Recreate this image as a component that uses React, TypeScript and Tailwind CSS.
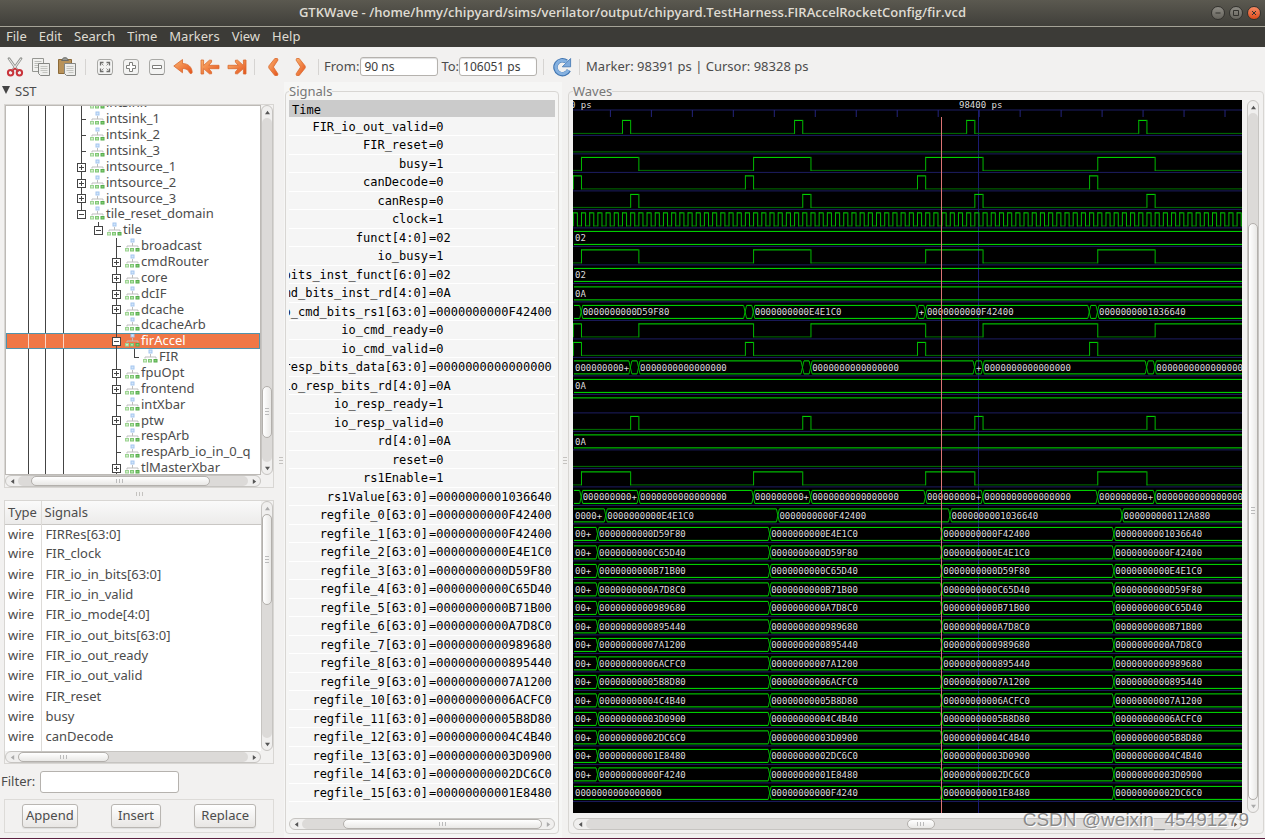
import { useId, type ReactNode } from 'react';
import clsx from 'clsx';

const menus = ['File', 'Edit', 'Search', 'Time', 'Markers', 'View', 'Help'];

type NodeKind = 'leaf' | 'plus' | 'minus' | 'corner';
type TreeNode = { name: string; depth: number; kind: NodeKind; last?: boolean; selected?: boolean };

const tree: TreeNode[] = [
  { name: 'intsink', depth: 3, kind: 'leaf' },
  { name: 'intsink_1', depth: 3, kind: 'leaf' },
  { name: 'intsink_2', depth: 3, kind: 'leaf' },
  { name: 'intsink_3', depth: 3, kind: 'leaf' },
  { name: 'intsource_1', depth: 3, kind: 'plus' },
  { name: 'intsource_2', depth: 3, kind: 'plus' },
  { name: 'intsource_3', depth: 3, kind: 'plus' },
  { name: 'tile_reset_domain', depth: 3, kind: 'minus', last: true },
  { name: 'tile', depth: 4, kind: 'minus', last: true },
  { name: 'broadcast', depth: 5, kind: 'leaf' },
  { name: 'cmdRouter', depth: 5, kind: 'plus' },
  { name: 'core', depth: 5, kind: 'plus' },
  { name: 'dcIF', depth: 5, kind: 'plus' },
  { name: 'dcache', depth: 5, kind: 'plus' },
  { name: 'dcacheArb', depth: 5, kind: 'leaf' },
  { name: 'firAccel', depth: 5, kind: 'minus', selected: true },
  { name: 'FIR', depth: 6, kind: 'corner', last: true },
  { name: 'fpuOpt', depth: 5, kind: 'plus' },
  { name: 'frontend', depth: 5, kind: 'plus' },
  { name: 'intXbar', depth: 5, kind: 'leaf' },
  { name: 'ptw', depth: 5, kind: 'plus' },
  { name: 'respArb', depth: 5, kind: 'leaf' },
  { name: 'respArb_io_in_0_q', depth: 5, kind: 'leaf' },
  { name: 'tlMasterXbar', depth: 5, kind: 'plus' },
];

const wires = [
  'FIRRes[63:0]', 'FIR_clock', 'FIR_io_in_bits[63:0]', 'FIR_io_in_valid', 'FIR_io_mode[4:0]',
  'FIR_io_out_bits[63:0]', 'FIR_io_out_ready', 'FIR_io_out_valid', 'FIR_reset', 'busy', 'canDecode',
];

// Times are counted in clock cycles from the left edge of the canvas.
const CYCLE = 8.195;
const END = 82;
const REPEAT = 21;
const ROW = 18.5;

type Wave =
  | { type: 'bit'; high: [number, number][] }
  | { type: 'bus'; at: number[]; text: string[] };
type Signal = { name: string; value: string; wave: Wave };

const hex = (millions: number) => (millions * 1000000).toString(16).toUpperCase().padStart(16, '0');
const zeros = hex(0);

const pulses = (from: number, to: number): Wave => ({
  type: 'bit',
  high: [0, 1, 2, 3].map((n) => [from + n * REPEAT, Math.min(to + n * REPEAT, END)] as [number, number]),
});
const level = (on: boolean): Wave => ({ type: 'bit', high: on ? [[0, END]] : [] });
const bus = (at: number[], text: string[]): Wave => ({ type: 'bus', at, text });
const clock: Wave = {
  type: 'bit',
  high: Array.from({ length: END }, (_, n) => [n, n + 0.5] as [number, number]),
};
const ready: Wave = { type: 'bit', high: [[0, 1], [8, 22], [29, 43], [50, 64], [71, END]] };

const regfile: Signal[] = Array.from({ length: 16 }, (_, r) => {
  const values = [0, 1, 2, 3].map((n) => hex(15 - r + n));
  let wave = bus([0, 3, 24, 45, 66], ['00+', ...values]);
  if (r === 0) wave = bus([0, 4, 25, 46, 67], ['0000+', ...values]);
  if (r === 15) wave = bus([0, 24, 45, 66], values);
  return { name: `regfile_${r}[63:0]`, value: hex(r === 0 ? 16 : 17 - r), wave };
});

const signals: Signal[] = [
  { name: 'FIR_io_out_valid', value: '0', wave: pulses(6, 7) },
  { name: 'FIR_reset', value: '0', wave: level(false) },
  { name: 'busy', value: '1', wave: pulses(1, 8) },
  { name: 'canDecode', value: '0', wave: pulses(0, 1) },
  { name: 'canResp', value: '0', wave: pulses(7, 8) },
  { name: 'clock', value: '1', wave: clock },
  { name: 'funct[4:0]', value: '02', wave: bus([0], ['02']) },
  { name: 'io_busy', value: '1', wave: pulses(1, 8) },
  { name: 'bits_inst_funct[6:0]', value: '02', wave: bus([0], ['02']) },
  { name: 'md_bits_inst_rd[4:0]', value: '0A', wave: bus([0], ['0A']) },
  {
    name: 'o_cmd_bits_rs1[63:0]',
    value: hex(16),
    wave: bus([0, 1, 21, 22, 42, 43, 63, 64], ['', hex(14), '', hex(15), '+', hex(16), '', hex(17)]),
  },
  { name: 'io_cmd_ready', value: '0', wave: ready },
  { name: 'io_cmd_valid', value: '0', wave: pulses(0, 1) },
  {
    name: 'resp_bits_data[63:0]',
    value: zeros,
    wave: bus([0, 7, 8, 28, 29, 49, 50, 70, 71], ['000000000+', '', zeros, '', zeros, '+', zeros, '', zeros]),
  },
  { name: 'io_resp_bits_rd[4:0]', value: '0A', wave: bus([0], ['0A']) },
  { name: 'io_resp_ready', value: '1', wave: level(true) },
  { name: 'io_resp_valid', value: '0', wave: pulses(7, 8) },
  { name: 'rd[4:0]', value: '0A', wave: bus([0], ['0A']) },
  { name: 'reset', value: '0', wave: level(false) },
  { name: 'rs1Enable', value: '1', wave: pulses(1, 7) },
  {
    name: 'rs1Value[63:0]',
    value: hex(17),
    wave: bus(
      [0, 1, 8, 22, 29, 43, 50, 64, 71],
      ['', '000000000+', zeros, '000000000+', zeros, '000000000+', zeros, '000000000+', zeros],
    ),
  },
  ...regfile,
];

function Scrollbar({ vertical, before, size, after }: { vertical?: boolean; before: number; size: number; after: number }) {
  const arrow = 'flex size-3 shrink-0 items-center justify-center';
  return (
    <div
      aria-hidden="true"
      className={clsx(
        'flex rounded-full border border-[#c6c4c1] bg-[#f0efee]',
        vertical ? 'h-full w-3 flex-col items-center' : 'h-3 w-full items-center',
      )}
    >
      <span className={arrow}>
        <svg viewBox="0 0 6 6" className="size-[5px]" fill={before ? '#555' : '#aaa'}>
          <path d={vertical ? 'M0 5 3 1 6 5Z' : 'M5 0 1 3 5 6Z'} />
        </svg>
      </span>
      <div
        className={clsx(
          'flex min-h-0 min-w-0 flex-1 rounded-full bg-[#dcdad8]',
          vertical ? 'w-full flex-col' : 'h-full',
        )}
      >
        <span className="basis-0" style={{ flexGrow: before }} />
        <span
          className={clsx(
            'flex basis-0 items-center justify-center gap-px rounded-full border border-[#b3b0ac] from-white to-[#e9e8e6]',
            vertical ? 'flex-col bg-linear-to-r' : 'bg-linear-to-b',
          )}
          style={{ flexGrow: size }}
        >
          {[0, 1, 2].map((n) => (
            <i key={n} className={clsx('bg-[#bbb]', vertical ? 'mb-px h-px w-1' : 'mr-px h-1 w-px')} />
          ))}
        </span>
        <span className="basis-0" style={{ flexGrow: after }} />
      </div>
      <span className={arrow}>
        <svg viewBox="0 0 6 6" className="size-[5px]" fill={after ? '#555' : '#aaa'}>
          <path d={vertical ? 'M0 1 3 5 6 1Z' : 'M1 0 5 3 1 6Z'} />
        </svg>
      </span>
    </div>
  );
}

function Grip({ vertical }: { vertical?: boolean }) {
  return (
    <span className={clsx('flex gap-0.5', vertical && 'flex-col')}>
      {[0, 1, 2].map((n) => (
        <i key={n} className={clsx('bg-[#c4c2bf]', vertical ? 'h-px w-1' : 'h-1 w-px')} />
      ))}
    </span>
  );
}

function ToolButton({ label, className, children }: { label: string; className?: string; children: ReactNode }) {
  return (
    <button type="button" aria-label={label} className={clsx('flex size-[22px] shrink-0 items-center justify-center', className)}>
      <svg viewBox="0 0 20 20" className="size-5" fill="none">
        {children}
      </svg>
    </button>
  );
}

function Orange({ d }: { d: string }) {
  const id = useId();
  return (
    <>
      <linearGradient id={id} x1="0" y1="0" x2="1" y2="1">
        <stop offset="0" stopColor="#fbb571" />
        <stop offset="1" stopColor="#e5511a" />
      </linearGradient>
      <path d={d} fill={`url(#${id})`} stroke="#d9692e" strokeWidth="0.8" strokeLinejoin="round" />
    </>
  );
}

function Plate({ children }: { children: ReactNode }) {
  return (
    <>
      <rect x="2.5" y="2.5" width="15" height="15" rx="2.5" fill="#f3f3f2" stroke="#a9a9a6" />
      <path d="M3.5 17.5h13" stroke="#858583" />
      {children}
    </>
  );
}

function Separator({ className }: { className?: string }) {
  return <span className={clsx('h-4 w-px shrink-0 bg-[#d6d4d2]', className)} />;
}

function Toolbar() {
  const field = 'h-[19px] w-[78px] rounded-[3px] border border-[#b5b2ae] bg-white px-[3px] text-[12px] text-[#3c3c3c] shadow-[inset_0_1px_1px_#ddd]';
  return (
    <div className="flex h-[35px] shrink-0 items-center pt-1 pl-1">
      <ToolButton label="Cut">
        <path d="M4 1.5 12.8 14M16 1.5 7.2 14" stroke="#8c8d8a" strokeWidth="2.6" strokeLinecap="round" />
        <path d="M4.2 2 12.6 13.6M15.8 2 7.4 13.6" stroke="#e8e9e6" strokeWidth="1.1" strokeLinecap="round" />
        <circle cx="5.6" cy="15.8" r="2.7" stroke="#c9343b" strokeWidth="2" />
        <circle cx="14.4" cy="15.8" r="2.7" stroke="#c9343b" strokeWidth="2" />
        <path d="M8 12.8 10 11.4l2 1.4" stroke="#c9343b" strokeWidth="1.6" />
      </ToolButton>
      <ToolButton label="Copy" className="ml-1">
        <path d="M1.5 1.5h11v13h-11Z" fill="#f1f1ef" stroke="#969793" />
        <path d="M3.5 4.5h7M3.5 6.5h7M3.5 8.5h7M3.5 10.5h7" stroke="#bcbdb9" />
        <path d="M7.5 6.5h11v12h-9l-2-2Z" fill="#eeeeec" stroke="#858683" />
        <path d="M9.5 9.5h7M9.5 11.5h7M9.5 13.5h7M11.5 15.5h5" stroke="#c3c4c0" />
      </ToolButton>
      <ToolButton label="Paste" className="ml-1">
        <path d="M1.5 2.5h13v14h-13Z" fill="#b8925a" stroke="#8c6a38" />
        <path d="M4.5 3.5 6.5.8h3l2 2.7Z" fill="#9a9b97" stroke="#6a6b67" />
        <path d="M7.5 6.5h11v12h-9l-2-2Z" fill="#eeeeec" stroke="#858683" />
        <path d="M9.5 9.5h7M9.5 11.5h7M9.5 13.5h7M11.5 15.5h5" stroke="#c3c4c0" />
      </ToolButton>
      <Separator className="ml-[7px]" />
      <ToolButton label="Zoom fit" className="ml-2">
        <Plate>
          <path d="M5.5 8.5v-3h3M11.5 5.5h3v3M14.5 11.5v3h-3M8.5 14.5h-3v-3" stroke="#6d6d6b" strokeWidth="1.3" />
          <path d="m6.5 6.5 2 2M13.5 6.5l-2 2M13.5 13.5l-2-2M6.5 13.5l2-2" stroke="#8f8f8c" />
        </Plate>
      </ToolButton>
      <ToolButton label="Zoom in" className="ml-1">
        <Plate>
          <path d="M8.5 5.5h3v3h3v3h-3v3h-3v-3h-3v-3h3Z" fill="#fff" stroke="#7d7d7a" />
        </Plate>
      </ToolButton>
      <ToolButton label="Zoom out" className="ml-1">
        <Plate>
          <path d="M5.5 8.5h9v3h-9Z" fill="#fff" stroke="#7d7d7a" />
        </Plate>
      </ToolButton>
      <ToolButton label="Zoom undo" className="ml-1">
        <Orange d="M.8 9 9.5 2.5v4C15 6.5 19 10 19.200 15.200c0 1.600-2.400 2-2.800.4C15.600 12.800 13 11.500 9.500 11.500v4.300Z" />
      </ToolButton>
      <ToolButton label="Zoom to start" className="ml-[5px]">
        <Orange d="M1 3h2.600v5.400L9.400 3.200h2.200v1.900L8.800 8.300H19v3.400H8.800l2.800 3.200v1.900H9.400L3.600 11.600V17H1Z" />
      </ToolButton>
      <ToolButton label="Zoom to end" className="ml-[5px]">
        <Orange d="M19 3h-2.600v5.400L10.600 3.200H8.400v1.900l2.800 3.200H1v3.400h10.200l-2.800 3.200v1.900h2.200l5.800-5.200V17H19Z" />
      </ToolButton>
      <Separator className="ml-1.5" />
      <ToolButton label="Previous edge" className="ml-[7px]">
        <Orange d="M11.800 1.500h2.600l.6 1.500-4.600 7 4.600 7-.6 1.500h-2.600L5.800 11V9Z" />
      </ToolButton>
      <ToolButton label="Next edge" className="ml-1.5">
        <Orange d="M8.200 1.500H5.600L5 3l4.600 7L5 17l.6 1.500h2.600L14.200 11V9Z" />
      </ToolButton>
      <Separator className="ml-1.5" />
      <label htmlFor="from" className="ml-[5px]">From:</label>
      <input id="from" className={clsx(field, 'ml-px')} defaultValue="90 ns" />
      <label htmlFor="to" className="ml-[3px]">To:</label>
      <input id="to" className={field} defaultValue="106051 ps" />
      <Separator className="ml-1.5" />
      <ToolButton label="Reload" className="ml-[7px]">
        <path d="M16.800 13.200A7 7 0 1 1 14.600 4.600" stroke="#3f74b0" strokeWidth="4.400" />
        <path d="M18.600 1.500v8.300h-8.300Z" fill="#7fabdc" stroke="#3f74b0" strokeWidth="0.800" />
        <path d="M16.400 13A6.600 6.600 0 1 1 14.600 5" stroke="#85b1e0" strokeWidth="3" />
      </ToolButton>
      <Separator className="ml-1.5" />
      <span className="ml-1.5 whitespace-pre">Marker: 98391 ps | Cursor: 98328 ps</span>
    </div>
  );
}

function HierarchyIcon() {
  return (
    <svg viewBox="0 0 15 14" className="mb-0.5 h-3.5 w-[15px] shrink-0" aria-hidden="true">
      <path d="M7.5 5v3M2 9.500V8h11v1.500" stroke="#bdbdbd" fill="none" />
      <rect x="6" y="1" width="3" height="3" fill="#d3e5fa" stroke="#a3c6ef" />
      <rect x="0.5" y="10.5" width="3" height="2.500" fill="#d2efca" stroke="#9cd392" />
      <rect x="5.500" y="10.500" width="3" height="2.500" fill="#b4e4a9" stroke="#7fc674" />
      <rect x="11" y="10.500" width="3" height="2.500" fill="#86d078" stroke="#56ab4d" />
    </svg>
  );
}

const indents = ['w-[17px]', 'w-[18px]', 'w-[18px]', 'w-[17px]', 'w-[18px]', 'w-[18px]'];

function TreeRow({ node }: { node: TreeNode }) {
  const expandable = node.kind === 'plus' || node.kind === 'minus';
  const line = node.selected ? 'border-[#fbd5c5]' : 'border-[#444]';
  return (
    <li
      className={clsx(
        'flex h-4 items-center pl-[22px] nth-[7n]:h-[15px]',
        node.selected && 'bg-[#f07746] text-white outline -outline-offset-1 outline-[#4f93ad]',
      )}
    >
      {indents.slice(0, node.depth).map((width, i) => (
        <span key={i} className={clsx('h-full shrink-0', width, (i < 3 || (i === 5 && node.depth === 6)) && 'border-l', line)} />
      ))}
      <span className="relative flex h-full w-[9px] shrink-0 items-center">
        <span className={clsx('absolute top-0 left-0 border-l border-[#444]', node.last ? 'h-1/2' : 'h-full')} />
        <span className="w-[5px] border-t border-[#444]" />
        {expandable && (
          <button
            type="button"
            aria-label={`Toggle ${node.name}`}
            className="absolute -left-1 flex size-[9px] items-center justify-center border border-[#444] bg-white"
          >
            <i className="h-px w-[5px] bg-[#444]" />
            {node.kind === 'plus' && <i className="absolute h-[5px] w-px bg-[#444]" />}
          </button>
        )}
      </span>
      <HierarchyIcon />
      <span className="ml-px whitespace-nowrap">{node.name}</span>
    </li>
  );
}

function Sidebar() {
  const frame = 'grid grid-cols-[minmax(0,1fr)_12px] border border-[#d8d6d3]';
  const button = 'h-6 rounded-[3px] border border-[#b9b6b2] bg-linear-to-b from-white to-[#e8e6e4] shadow-[0_1px_1px_#ddd]';
  return (
    <aside className="flex w-[278px] shrink-0 flex-col pr-1 pl-1">
      <h2 className="flex h-[22px] shrink-0 items-start gap-[5px]">
        <svg viewBox="0 0 8 8" className="mt-1 -ml-0.5 size-2" fill="#444">
          <path d="M0 0h8L4 8Z" />
        </svg>
        <span className="leading-[18px]">SST</span>
      </h2>

      <div className={clsx(frame, 'min-h-0 flex-1 grid-rows-[minmax(0,1fr)_12px]')}>
        <div className="flex flex-col justify-end overflow-hidden border border-[#bdbab6] bg-white">
          <ul className="-mb-0.5">
            {tree.map((node) => (
              <TreeRow key={node.name} node={node} />
            ))}
          </ul>
        </div>
        <Scrollbar vertical before={272} size={51} after={24} />
        <Scrollbar before={13} size={180} after={39} />
      </div>

      <div className="flex h-3 shrink-0 items-center justify-center">
        <Grip />
      </div>

      <div className={clsx(frame, 'h-[264px] shrink-0 grid-rows-[minmax(0,1fr)_12px]')}>
        <div className="overflow-hidden bg-white">
          <table className="w-full border-collapse text-left">
            <thead className="bg-linear-to-b from-[#fafafa] to-[#ecebea]">
              <tr className="h-[23px] border-b border-[#c9c7c4]">
                <th className="w-9 border-r border-[#dddbd8] px-[3px] font-normal">Type</th>
                <th className="px-[3px] font-normal">Signals</th>
              </tr>
            </thead>
            <tbody>
              {wires.map((wire) => (
                <tr key={wire} className="h-5 nth-[3n]:h-[21px]">
                  <td className="border-r border-[#dddbd8] px-[3px]">wire</td>
                  <td className="px-1">{wire}</td>
                </tr>
              ))}
              <tr className="h-5">
                <td className="border-r border-[#dddbd8]" />
                <td />
              </tr>
            </tbody>
          </table>
        </div>
        <Scrollbar vertical before={0} size={91} after={136} />
        <Scrollbar before={0} size={91} after={142} />
      </div>

      <div className="-ml-1 flex h-[35px] shrink-0 items-center gap-[5px] pl-px">
        <label htmlFor="filter">Filter:</label>
        <input id="filter" className="h-[22px] w-[139px] rounded-[3px] border border-[#b5b2ae] bg-white px-1" />
      </div>

      <div className="mb-[5px] flex h-[34px] shrink-0 items-center justify-between border border-[#dddbd8] px-[17px]">
        <button type="button" className={clsx(button, 'px-[3px]')}>Append</button>
        <button type="button" className={clsx(button, 'px-1.5')}>Insert</button>
        <button type="button" className={clsx(button, 'px-1.5')}>Replace</button>
      </div>
    </aside>
  );
}

function SignalNames() {
  return (
    <fieldset className="mb-1 flex w-[274px] shrink-0 flex-col rounded-[4px] border border-[#d8d6d3] px-[3px] pb-[3px]">
      <legend className="h-[18px] leading-[18px] text-[#777]">Signals</legend>
      <div className="flex min-h-0 flex-1 flex-col overflow-hidden bg-[#f5f5f5] font-['DejaVu_Sans_Mono','Liberation_Mono',monospace] text-[12px] text-black">
        <div className="h-[17px] shrink-0 bg-[#cbcbcb] pl-[3px] leading-[21px]">Time</div>
        <ul className="pt-px">
          {signals.map((signal) => (
            <li key={signal.name} className="flex h-[18px] border-b border-white leading-[18px] even:h-[19px]">
              <span className="flex w-[139px] shrink-0 justify-end overflow-hidden">{signal.name}</span>
              <span className="ml-px whitespace-nowrap">={signal.value}</span>
            </li>
          ))}
        </ul>
      </div>
      <div className="mt-[5px]">
        <Scrollbar before={42} size={201} after={0} />
      </div>
    </fieldset>
  );
}

function Trace({ wave, base }: { wave: Wave; base: number }) {
  const hi = base - 15;
  const lo = base - 2;
  if (wave.type === 'bit') {
    const gaps: [number, number][] = [];
    let from = 0;
    wave.high.forEach(([a, b]) => {
      if (a > from) gaps.push([from, a]);
      from = b;
    });
    if (from < END) gaps.push([from, END]);
    return (
      <>
        <path d={gaps.map(([a, b]) => `M${a * CYCLE} ${lo}H${b * CYCLE}`).join('')} stroke="#007000" />
        <path d={wave.high.map(([a, b]) => `M${a * CYCLE} ${hi}H${b * CYCLE}`).join('')} stroke="#00e600" />
        <path
          d={wave.high
            .flat()
            .filter((t) => t < END)
            .filter((t) => t > 0 || wave.high[0][1] < END)
            .map((t) => `M${t * CYCLE + 0.3} ${lo + 0.5}V${hi - 0.5}`)
            .join('')}
          stroke="#00b800"
        />
      </>
    );
  }
  return (
    <>
      {wave.at.map((start, i) => {
        const x0 = start * CYCLE;
        const x1 = (wave.at[i + 1] ?? END) * CYCLE;
        const left = i ? x0 + 1.5 : 1;
        return (
          <g key={start}>
            <path d={`M${left} ${hi}H${x1 - 1.5}M${left} ${lo}H${x1 - 1.5}`} stroke="#00e600" />
            {i > 0 && (
              <path d={`M${x0 - 1.5} ${hi}L${x0 + 1.5} ${lo}M${x0 + 1.5} ${hi}L${x0 - 1.5} ${lo}`} stroke="#00b000" />
            )}
            <text x={i ? x0 + 1.5 : 2} y={base - 5} fill="#dcdcdc" stroke="none">
              {wave.text[i]}
            </text>
          </g>
        );
      })}
    </>
  );
}

function Waves() {
  return (
    <fieldset className="mr-px mb-1 flex min-w-0 flex-1 flex-col rounded-[4px] border border-[#d8d6d3] px-1 pb-[3px]">
      <legend className="h-[18px] leading-[18px] text-[#777]">Waves</legend>
      <div className="flex min-h-0 flex-1 gap-[5px]">
        <svg
          role="img"
          aria-label="Waveforms"
          className="h-full min-w-0 flex-1 bg-black font-['DejaVu_Sans_Mono','Liberation_Mono',monospace] text-[9px]"
          fill="none"
        >
          <line x1="0" x2="100%" y1="10" y2="10" stroke="#1c1c62" />
          {Array.from({ length: 16 }, (_, n) => 37.4 + n * 5 * CYCLE).map((x) => (
            <line key={x} x1={x} x2={x} y1="10" y2="17" stroke="#24247c" />
          ))}
          {signals.map((signal, i) => (
            <line key={signal.name} x1="0" x2="100%" y1={35.4 + i * ROW} y2={35.4 + i * ROW} stroke="#1c1c62" />
          ))}
          <line x1="405.5" x2="405.5" y1="10" y2="100%" stroke="#1a1a72" />
          <text x="-3" y="8" fill="#dcdcdc">0 ps</text>
          <text x="386" y="8" fill="#dcdcdc">98400 ps</text>
          {signals.map((signal, i) => (
            <Trace key={signal.name} wave={signal.wave} base={35.4 + i * ROW} />
          ))}
          <line x1="368.5" x2="368.5" y1="17" y2="100%" stroke="#dc7474" />
        </svg>
        <Scrollbar vertical before={110} size={577} after={0} />
      </div>
      <div className="mt-[5px] mr-[17px]">
        <Scrollbar before={323} size={27} after={296} />
      </div>
    </fieldset>
  );
}

function WindowButton({ label, close, d }: { label: string; close?: boolean; d: string }) {
  return (
    <button
      type="button"
      aria-label={label}
      className={clsx(
        'flex size-3.5 items-center justify-center rounded-full border border-[#33322e]',
        close ? 'bg-linear-to-b from-[#f58a63] to-[#df4a16]' : 'bg-linear-to-b from-[#8e8c85] to-[#66645d]',
      )}
    >
      <svg viewBox="0 0 8 8" className="size-2" fill="none" stroke="#33322e">
        <path d={d} />
      </svg>
    </button>
  );
}

export default function App() {
  return (
    <div className="relative flex h-screen flex-col overflow-hidden bg-[#f2f1f0] font-['Noto_Sans','Open_Sans',sans-serif] text-[13px] text-[#4c4c4c]">
      <header className="relative flex h-[26px] shrink-0 items-center justify-center bg-linear-to-b from-[#5b5950] to-[#403f3a] text-[#dfdbd2]">
        <h1 className="font-['Open_Sans','Noto_Sans',sans-serif] font-semibold whitespace-nowrap">
          GTKWave - /home/hmy/chipyard/sims/verilator/output/chipyard.TestHarness.FIRAccelRocketConfig/fir.vcd
        </h1>
        <div className="absolute right-1 flex gap-1">
          <WindowButton label="Minimize" d="M1.500 4h5" />
          <WindowButton label="Maximize" d="M1.500 1.500h5v5h-5Z" />
          <WindowButton label="Close" close d="m2 2 4 4M6 2 2 6" />
        </div>
      </header>
      <nav className="flex h-[21px] shrink-0 items-center gap-3 border-t border-[#a5a397] bg-[#3c3b37] pl-1.5 text-[#dfdbd2]">
        {menus.map((menu) => (
          <button key={menu} type="button">{menu}</button>
        ))}
      </nav>
      <Toolbar />
      <main className="flex min-h-0 flex-1">
        <Sidebar />
        <div className="flex w-1.5 shrink-0 items-center justify-center">
          <Grip vertical />
        </div>
        <div className="flex shrink-0 bg-[#f6f6f5] pr-[3px] pl-px">
          <SignalNames />
        </div>
        <div className="flex w-1.5 shrink-0 items-center justify-center">
          <Grip vertical />
        </div>
        <Waves />
      </main>
      <div className="h-px shrink-0 bg-[#5c1f40]" />
      <p className="pointer-events-none absolute right-4 bottom-1 font-['Liberation_Sans',sans-serif] text-[19px] leading-[30px] text-[#8a8a8a] [text-shadow:1px_1px_0_#fff]">
        CSDN @weixin_45491279
      </p>
    </div>
  );
}
